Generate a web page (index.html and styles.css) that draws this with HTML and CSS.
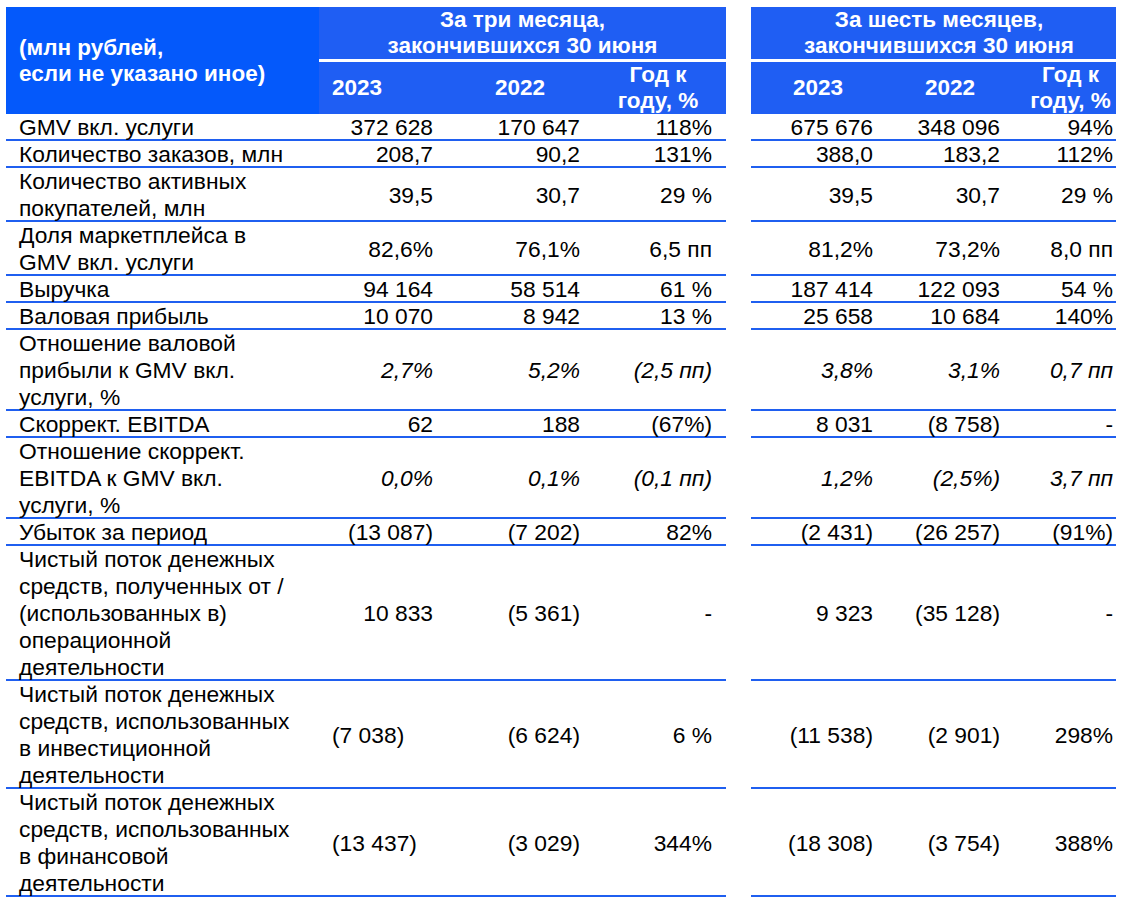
FILE: index.html
```html
<!DOCTYPE html>
<html lang="ru">
<head>
<meta charset="utf-8">
<link rel="stylesheet" href="styles.css">
</head>
<body>
<table class="fin">
  <colgroup>
    <col class="w-label"><col class="w-c1"><col class="w-c2"><col class="w-c3">
    <col class="w-gap"><col class="w-c4"><col class="w-c5"><col class="w-c6">
  </colgroup>
  <thead>
    <tr>
      <th class="h-label" rowspan="2">(млн рублей,<br>если не указано иное)</th>
      <th class="h-group" colspan="3">За три месяца,<br>закончившихся 30 июня</th>
      <th class="gap" rowspan="2"></th>
      <th class="h-group h-group-r" colspan="3">За шесть месяцев,<br>закончившихся 30 июня</th>
    </tr>
    <tr>
      <th class="h-year h1">2023</th>
      <th class="h-year h2">2022</th>
      <th class="h-year h3">Год к<br>году, %</th>
      <th class="h-year h4">2023</th>
      <th class="h-year h5">2022</th>
      <th class="h-year h6">Год к<br>году, %</th>
    </tr>
  </thead>
  <tbody>
    <tr>
      <td class="lbl">GMV вкл. услуги</td>
      <td class="v1">372 628</td><td class="v2">170 647</td><td class="v3">118%</td>
      <td class="gap"></td>
      <td class="v4">675 676</td><td class="v5">348 096</td><td class="v6">94%</td>
    </tr>
    <tr>
      <td class="lbl">Количество заказов, млн</td>
      <td class="v1">208,7</td><td class="v2">90,2</td><td class="v3">131%</td>
      <td class="gap"></td>
      <td class="v4">388,0</td><td class="v5">183,2</td><td class="v6">112%</td>
    </tr>
    <tr>
      <td class="lbl">Количество активных<br>покупателей, млн</td>
      <td class="v1">39,5</td><td class="v2">30,7</td><td class="v3">29 %</td>
      <td class="gap"></td>
      <td class="v4">39,5</td><td class="v5">30,7</td><td class="v6">29 %</td>
    </tr>
    <tr>
      <td class="lbl">Доля маркетплейса в<br>GMV вкл. услуги</td>
      <td class="v1">82,6%</td><td class="v2">76,1%</td><td class="v3">6,5 пп</td>
      <td class="gap"></td>
      <td class="v4">81,2%</td><td class="v5">73,2%</td><td class="v6">8,0 пп</td>
    </tr>
    <tr>
      <td class="lbl">Выручка</td>
      <td class="v1">94 164</td><td class="v2">58 514</td><td class="v3">61 %</td>
      <td class="gap"></td>
      <td class="v4">187 414</td><td class="v5">122 093</td><td class="v6">54 %</td>
    </tr>
    <tr>
      <td class="lbl">Валовая прибыль</td>
      <td class="v1">10 070</td><td class="v2">8 942</td><td class="v3">13 %</td>
      <td class="gap"></td>
      <td class="v4">25 658</td><td class="v5">10 684</td><td class="v6">140%</td>
    </tr>
    <tr class="it">
      <td class="lbl">Отношение валовой<br>прибыли к GMV вкл.<br>услуги, %</td>
      <td class="v1">2,7%</td><td class="v2">5,2%</td><td class="v3">(2,5 пп)</td>
      <td class="gap"></td>
      <td class="v4">3,8%</td><td class="v5">3,1%</td><td class="v6">0,7 пп</td>
    </tr>
    <tr>
      <td class="lbl">Скоррект. EBITDA</td>
      <td class="v1">62</td><td class="v2">188</td><td class="v3">(67%)</td>
      <td class="gap"></td>
      <td class="v4">8 031</td><td class="v5">(8 758)</td><td class="v6">-</td>
    </tr>
    <tr class="it">
      <td class="lbl">Отношение скоррект.<br>EBITDA к GMV вкл.<br>услуги, %</td>
      <td class="v1">0,0%</td><td class="v2">0,1%</td><td class="v3">(0,1 пп)</td>
      <td class="gap"></td>
      <td class="v4">1,2%</td><td class="v5">(2,5%)</td><td class="v6">3,7 пп</td>
    </tr>
    <tr>
      <td class="lbl">Убыток за период</td>
      <td class="v1">(13 087)</td><td class="v2">(7 202)</td><td class="v3">82%</td>
      <td class="gap"></td>
      <td class="v4">(2 431)</td><td class="v5">(26 257)</td><td class="v6">(91%)</td>
    </tr>
    <tr>
      <td class="lbl">Чистый поток денежных<br>средств, полученных от /<br>(использованных в)<br>операционной<br>деятельности</td>
      <td class="v1">10 833</td><td class="v2">(5 361)</td><td class="v3">-</td>
      <td class="gap"></td>
      <td class="v4">9 323</td><td class="v5">(35 128)</td><td class="v6">-</td>
    </tr>
    <tr>
      <td class="lbl">Чистый поток денежных<br>средств, использованных<br>в инвестиционной<br>деятельности</td>
      <td class="v1 v1-left">(7 038)</td><td class="v2">(6 624)</td><td class="v3">6 %</td>
      <td class="gap"></td>
      <td class="v4">(11 538)</td><td class="v5">(2 901)</td><td class="v6">298%</td>
    </tr>
    <tr>
      <td class="lbl">Чистый поток денежных<br>средств, использованных<br>в финансовой<br>деятельности</td>
      <td class="v1 v1-left">(13 437)</td><td class="v2">(3 029)</td><td class="v3">344%</td>
      <td class="gap"></td>
      <td class="v4">(18 308)</td><td class="v5">(3 754)</td><td class="v6">388%</td>
    </tr>
  </tbody>
</table>
</body>
</html>
```

FILE: styles.css
```css
html, body {
  background: #ffffff;
}
body {
  margin: 7px 0 0 6px;
  font-family: "Liberation Sans", Arial, sans-serif;
  color: #000000;
}
.fin {
  border-collapse: separate;
  border-spacing: 0;
  table-layout: fixed;
  width: 1110px;
}
.w-label { width: 313px; }
.w-c1 { width: 121px; }
.w-c2 { width: 150px; }
.w-c3 { width: 136px; }
.w-gap { width: 25px; }
.w-c4 { width: 134px; }
.w-c5 { width: 125px; }
.w-c6 { width: 106px; }

th, td {
  padding: 0;
  white-space: nowrap;
}
thead th {
  color: #ffffff;
  font-weight: bold;
  font-size: 22.5px;
  line-height: 26px;
  vertical-align: middle;
}
.h-label {
  background: #0459fb;
  text-align: left;
  padding-left: 13px;
}
.h-group {
  background: #1f5ef3;
  text-align: center;
  border-bottom: 3px solid #ffffff;
}
.h-group-r {
  padding-left: 11px;
}
th.gap, td.gap {
  background: none;
}
.h-year {
  background: #1f5ef3;
  text-align: left;
}
.h1 { padding-left: 13px; }
.h2 { padding-left: 55px; }
.h3 { text-align: center; }
.h4 { padding-left: 42px; }
.h5 { padding-left: 40px; }
.h6 { text-align: center; padding-left: 15px; }

tbody td {
  font-size: 22.8px;
  line-height: 27px;
  vertical-align: middle;
  text-align: right;
  background: linear-gradient(#1f5ff0, #1f5ff0) left bottom / 100% 2px no-repeat;
}
tbody td.lbl {
  text-align: left;
  padding-left: 13px;
}
tbody td.gap {
  background: none;
}
.it td.v1, .it td.v2, .it td.v3, .it td.v4, .it td.v5, .it td.v6 {
  font-style: italic;
}
.v1 { padding-right: 7px; }
tbody td.v1-left { text-align: left; padding-left: 13px; padding-right: 0; }
.v2 { padding-right: 10px; }
.v3 { padding-right: 14px; }
.v4 { padding-right: 12px; }
.v5 { padding-right: 10px; }
.v6 { padding-right: 3px; }
```
